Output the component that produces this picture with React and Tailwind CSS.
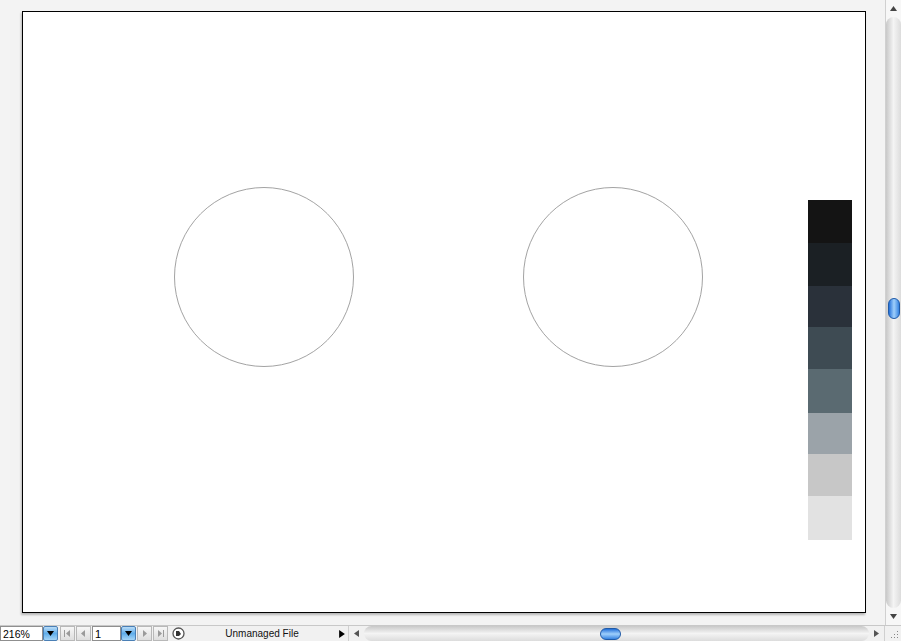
import React from 'react';

const swatches = [
  ['h-[43px]', 'bg-[#141414]'],
  ['h-[43px]', 'bg-[#1b2024]'],
  ['h-[41px]', 'bg-[#2a313a]'],
  ['h-[42px]', 'bg-[#3e4b53]'],
  ['h-[44px]', 'bg-[#5a6a71]'],
  ['h-[41px]', 'bg-[#9ba3a9]'],
  ['h-[42px]', 'bg-[#c7c7c7]'],
  ['h-[44px]', 'bg-[#e2e2e2]'],
];

const Tri = ({ dir = 'down', color = '#000', size = 7 }) => {
  const pts = {
    down: '0,1 7,1 3.5,6',
    up: '0,6 7,6 3.5,1',
    left: '6,0 6,7 1,3.5',
    right: '1,0 1,7 6,3.5',
  }[dir];
  return (
    <svg width={size} height={size} viewBox="0 0 7 7">
      <polygon points={pts} fill={color} />
    </svg>
  );
};

const BlueBtn = () => (
  <div className="w-[15px] flex items-center justify-center border border-[#4a7fb5] rounded-[2px] bg-gradient-to-b from-[#b9dcf7] via-[#5fadea] to-[#a6d6f7]">
    <Tri dir="down" />
  </div>
);

const NavBtn = ({ kind }) => (
  <div className="w-[15px] flex items-center justify-center border border-[#b8b8b8] bg-gradient-to-b from-[#f7f7f7] to-[#dedede]">
    <svg width="9" height="9" viewBox="0 0 9 9">
      {kind === 'first' && (<><rect x="1" y="1" width="1" height="7" fill="#9a9a9a" /><polygon points="7,1 7,8 3,4.5" fill="#9a9a9a" /></>)}
      {kind === 'prev' && <polygon points="6,1 6,8 2,4.5" fill="#9a9a9a" />}
      {kind === 'next' && <polygon points="3,1 3,8 7,4.5" fill="#9a9a9a" />}
      {kind === 'last' && (<><polygon points="2,1 2,8 6,4.5" fill="#9a9a9a" /><rect x="7" y="1" width="1" height="7" fill="#9a9a9a" /></>)}
    </svg>
  </div>
);

export default function App() {
  return (
    <div className="w-[901px] h-[641px] flex flex-col bg-[#f3f3f3] overflow-hidden" style={{ fontFamily: '"Liberation Sans", Arial, sans-serif' }}>
      <div className="flex h-[625px]">
        {/* artboard area */}
        <div className="flex-1 pl-[22px] pt-[11px]">
          <div className="relative w-[844px] h-[602px] bg-white border border-black shadow-[-1px_2px_2px_rgba(0,0,0,0.25)]">
            <div className="absolute left-[151px] top-[175px] w-[180px] h-[180px] rounded-full border border-[#a3a3a3]" />
            <div className="absolute left-[500px] top-[175px] w-[180px] h-[180px] rounded-full border border-[#a3a3a3]" />
            <div className="absolute left-[785px] top-[188px] w-[44px] flex flex-col">
              {swatches.map(([h, c], i) => (
                <div key={i} className={`${h} ${c}`} />
              ))}
            </div>
          </div>
        </div>
        {/* vertical scrollbar */}
        <div className="w-[16px] flex flex-col border-l border-[#d0d0d0] bg-[#f7f7f7]">
          <div className="h-[17px] flex items-start justify-center pt-[5px]">
            <Tri dir="up" color="#444" />
          </div>
          <div className="flex-1 flex flex-col items-center justify-start pt-[281px] rounded-t-[8px] rounded-b-[8px] bg-gradient-to-r from-[#c8c8c8] via-[#f4f4f4] to-[#dcdcdc]">
            <div className="w-[12px] h-[21px] rounded-[6px] border border-[#1f5aa8] bg-gradient-to-r from-[#1f6fd8] via-[#9fcffb] to-[#3583e0]" />
          </div>
          <div className="h-[17px] flex items-center justify-center">
            <Tri dir="down" color="#444" />
          </div>
        </div>
      </div>
      {/* bottom status bar */}
      <div className="h-[16px] flex border-t border-[#c8c8c8] bg-[#f1f1f1] text-[11px] text-black leading-[14px]">
        <div className="w-[43px] bg-white border border-[#8f8f8f] pl-[2px] text-[10.5px]">216%</div>
        <BlueBtn />
        <div className="w-[2px]" />
        <NavBtn kind="first" />
        <div className="w-[1px]" />
        <NavBtn kind="prev" />
        <div className="w-[1px]" />
        <div className="w-[29px] bg-white border border-[#8f8f8f] pl-[2px]">1</div>
        <BlueBtn />
        <div className="w-[1px]" />
        <NavBtn kind="next" />
        <div className="w-[1px]" />
        <NavBtn kind="last" />
        <div className="w-[20px] flex items-center justify-center">
          <svg width="13" height="13" viewBox="0 0 13 13">
            <circle cx="6.5" cy="6.5" r="5.5" fill="#fff" stroke="#555" strokeWidth="1.3" />
            <path d="M4 4 L7 4 L9 7 L7 9 L4 9 Z" fill="#333" />
          </svg>
        </div>
        <div className="w-[148px] flex items-center justify-center text-[10px] text-[#111]">Unmanaged File</div>
        <div className="w-[12px] flex items-center justify-center">
          <Tri dir="right" size={8} />
        </div>
        {/* horizontal scrollbar */}
        <div className="w-[16px] flex items-center justify-center border-l border-[#d0d0d0]">
          <Tri dir="left" color="#555" />
        </div>
        <div className="w-[505px] flex items-center pl-[236px] rounded-l-[8px] rounded-r-[8px] bg-gradient-to-b from-[#c8c8c8] via-[#f4f4f4] to-[#dcdcdc]">
          <div className="w-[21px] h-[12px] rounded-[6px] border border-[#1f5aa8] bg-gradient-to-b from-[#1f6fd8] via-[#9fcffb] to-[#3583e0]" />
        </div>
        <div className="w-[15px] flex items-center justify-center">
          <Tri dir="right" color="#555" />
        </div>
        <div className="flex-1 flex items-end justify-end pr-[2px] pb-[2px] border-l border-[#d0d0d0]">
          <svg width="9" height="9" viewBox="0 0 9 9">
            {[[8, 2], [8, 5], [5, 5], [8, 8], [5, 8], [2, 8]].map(([x, y], i) => (
              <rect key={i} x={x - 1} y={y - 1} width="1" height="1" fill="#888" />
            ))}
          </svg>
        </div>
      </div>
    </div>
  );
}
